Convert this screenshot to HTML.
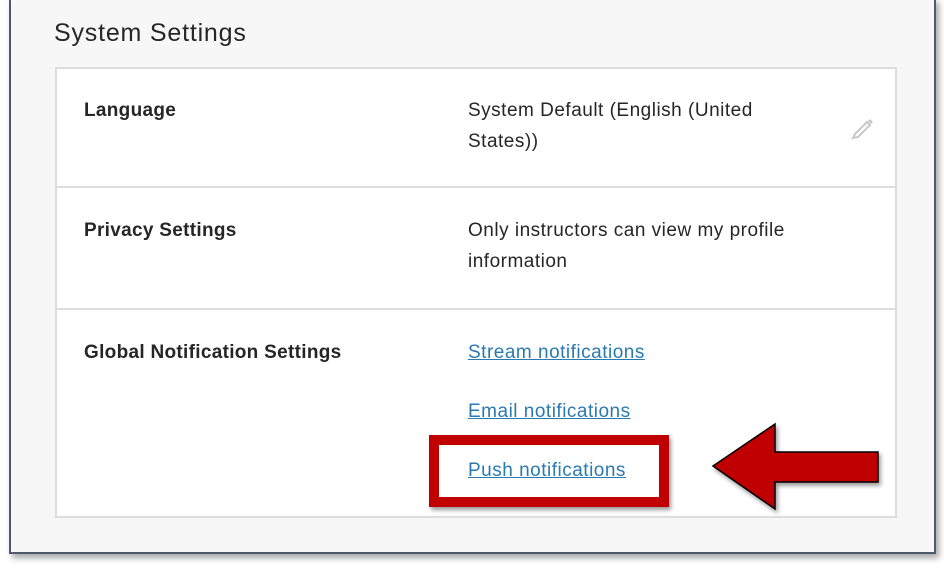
<!DOCTYPE html>
<html><head><style>
*{margin:0;padding:0;box-sizing:border-box}
body{width:944px;height:571px;background:#fff;position:relative;overflow:hidden;font-family:"Liberation Sans","DejaVu Sans",sans-serif;color:#262626}
.frame{position:absolute;left:9px;top:-2px;width:927px;height:556px;background:#f7f7f7;border:2px solid #4d5a6b;box-shadow:3px 4px 6px rgba(0,0,0,.35)}
.panel{position:absolute;left:55px;top:67px;width:842px;height:451px;background:#fff;border:2px solid #ddd}
.sep{position:absolute;left:55px;width:842px;height:2px;background:#ddd}
.t{position:absolute;font-size:19px;line-height:31px;white-space:nowrap;letter-spacing:.5px}
.b{font-weight:bold;letter-spacing:.3px}
a{color:#2a7ab0;text-decoration:underline}
.h{position:absolute;left:54px;top:19px;font-size:25px;letter-spacing:.8px}
</style></head><body>
<div class="frame"></div>
<div class="h">System Settings</div>
<div class="panel"></div>
<div class="sep" style="top:186px"></div>
<div class="sep" style="top:308px"></div>
<div class="t b" style="left:84px;top:95px">Language</div>
<div class="t" style="left:468px;top:95px">System Default (English (United<br>States))</div>
<svg style="position:absolute;left:850px;top:116px" width="26" height="24" viewBox="0 0 26 24"><path d="M5 18 L17 6 L20 9 L8 21 L3 22 Z" fill="none" stroke="#c8c8c8" stroke-width="2"/><path d="M18 5 L20 3 L23 6 L21 8 Z" fill="#c8c8c8"/></svg>
<div class="t b" style="left:84px;top:215px">Privacy Settings</div>
<div class="t" style="left:468px;top:215px">Only instructors can view my profile<br>information</div>
<div class="t b" style="left:84px;top:337px">Global Notification Settings</div>
<div class="t" style="left:468px;top:337px"><a>Stream notifications</a></div>
<div class="t" style="left:468px;top:396px"><a>Email notifications</a></div>
<div class="t" style="left:468px;top:455px"><a>Push notifications</a></div>
<div style="position:absolute;left:429px;top:435px;width:240px;height:72px;border:10px solid #c00000;box-shadow:2px 3px 4px rgba(0,0,0,.4)"></div>
<svg style="position:absolute;left:700px;top:415px" width="190" height="105" viewBox="700 415 190 105">
<defs><filter id="s"><feDropShadow dx="2" dy="3" stdDeviation="2" flood-opacity=".4"/></filter></defs>
<path d="M713 466 L775 424 L775 452 L878 452 L878 482 L775 482 L775 509 Z" fill="#c00000" stroke="#000" stroke-width="1.5" filter="url(#s)"/>
</svg>
</body></html>
